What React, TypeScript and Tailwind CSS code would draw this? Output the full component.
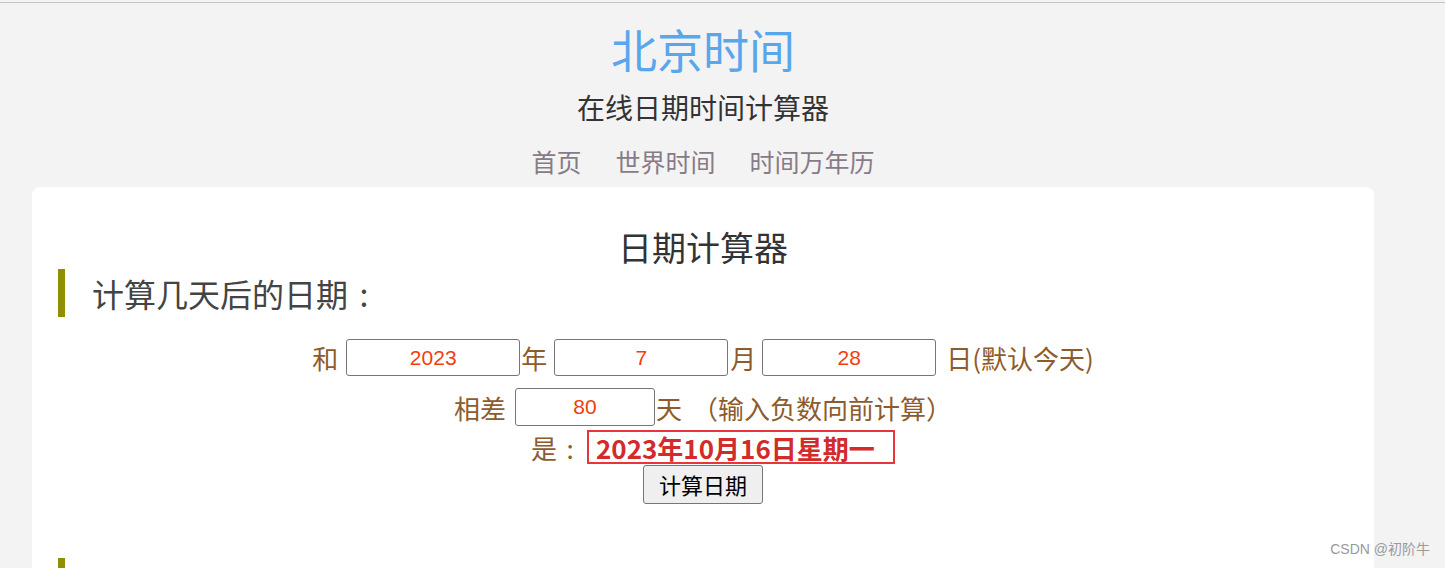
import React from 'react'

const cjk = "font-['Noto_Sans_CJK_SC',sans-serif]"

function SectionHeading({ children }: { children: React.ReactNode }) {
  return (
    <div className="ml-[26px] flex h-[48px] items-center border-l-[7px] border-[#8f8f00] pl-[27px] text-[32px] leading-[48px] text-[#444]">
      {children}
      <span className="inline-block w-[32px] text-center">:</span>
    </div>
  )
}

function DateInput({ value, width }: { value: string; width: string }) {
  return (
    <input
      defaultValue={value}
      className={`${width} h-[37px] shrink-0 rounded-[3px] border border-[#767676] bg-white text-center font-['Liberation_Sans',sans-serif] text-[21px] text-[#f0400c] outline-none`}
    />
  )
}

export default function App() {
  return (
    <div className={`relative h-[568px] overflow-hidden bg-[#f3f3f3] ${cjk}`}>
      <div className="h-[2px]" />
      <div className="h-px bg-[#c4c4c4]" />

      <div className="w-[1406px]">
        {/* header */}
        <h1 className="mt-[17px] text-center text-[46px] leading-[56px] text-[#5aa6ec]">北京时间</h1>
        <h2 className="mt-[13px] text-center text-[28px] leading-[36px] text-[#333]">在线日期时间计算器</h2>
        <nav className="mt-[20px] flex justify-center gap-[34px] text-[25px] leading-[32px] text-[#877b88]">
          <a>首页</a>
          <a>世界时间</a>
          <a>时间万年历</a>
        </nav>

        {/* card */}
        <div className="mx-[32px] mt-[10px] h-[600px] rounded-[8px] bg-white pt-[40px]">
          <h3 className="text-center text-[34px] leading-[40px] text-[#333]">日期计算器</h3>

          <div className="mt-[2px]">
            <SectionHeading>计算几天后的日期</SectionHeading>
          </div>

          <div className="mt-[22px] flex h-[37px] items-center justify-center text-[26px] text-[#8d5b2d]">
            <span className="mr-[8px]">和</span>
            <DateInput value="2023" width="w-[174px]" />
            <span className="mr-[7px] ml-[1px]">年</span>
            <DateInput value="7" width="w-[174px]" />
            <span className="mr-[6px] ml-[2px]">月</span>
            <DateInput value="28" width="w-[174px]" />
            <span className="ml-[10px]">日(默认今天)</span>
          </div>

          <div className="mt-[12px] flex h-[38px] items-center justify-center text-[26px] text-[#8d5b2d]">
            <span className="mr-[9px]">相差</span>
            <DateInput value="80" width="w-[140px] h-[38px]" />
            <span className="ml-[1px]">天</span>
            <span className="ml-[10px]">（输入负数向前计算）</span>
          </div>

          <div className="mt-[4px] flex h-[34px] items-center justify-center text-[26px] text-[#8d5b2d]">
            <span className="ml-[20px]">是</span>
            <span className="inline-block w-[26px] text-center">:</span>
            <span className="ml-[4px] flex h-[34px] w-[308px] items-center border-2 border-[#e8353b] pl-[7px] text-[26px] font-bold text-[#d32a2a]">
              2023年10月16日星期一
            </span>
          </div>

          <div className="mt-[1px] flex justify-center">
            <button className="h-[39px] w-[120px] rounded-[3px] border border-[#767676] bg-[#efefef] text-[22px] text-black">
              计算日期
            </button>
          </div>

          <div className="mt-[54px]">
            <SectionHeading>计算两个日期间隔几天</SectionHeading>
          </div>
        </div>
      </div>

      <div className="absolute right-[15px] bottom-[8px] font-['Liberation_Sans','Noto_Sans_CJK_SC',sans-serif] text-[14px] text-[#9a9a9a]">
        CSDN @初阶牛
      </div>
    </div>
  )
}
